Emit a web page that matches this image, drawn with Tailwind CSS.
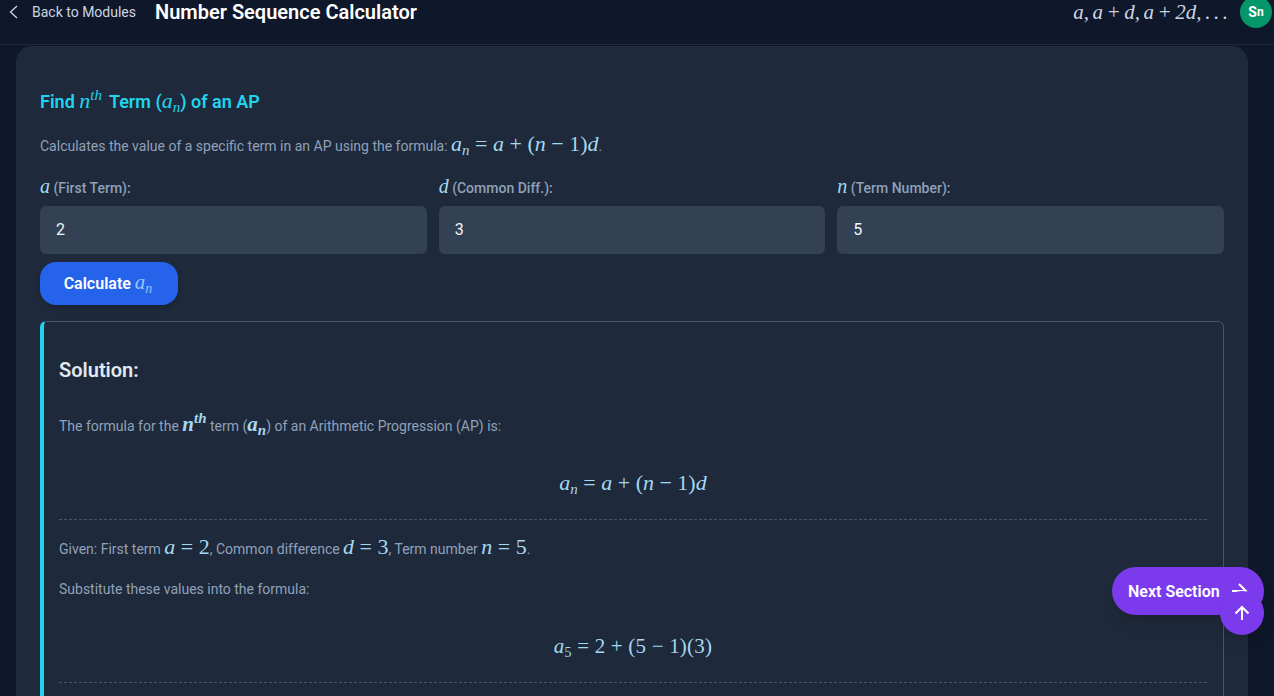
<!DOCTYPE html>
<html lang="en">
<head>
  <meta charset="UTF-8"><meta name="viewport" content="width=device-width,initial-scale=1.0">
  <title>Number Sequence Calculator</title>
  <script src="https://cdn.jsdelivr.net/npm/@tailwindcss/browser@4"></script>
</head>
<body class="bg-[#0f172a] h-[696px] overflow-hidden relative font-['Roboto',sans-serif] text-slate-200">
  <header class="h-[45px] border-b border-[#1e293b] bg-[#0f172a] flex justify-between pl-2 pr-[2px]">
    <div class="flex items-start">
      <a href="#" class="flex items-center h-6 text-[14px] text-slate-300">
        <svg class="w-3 h-4 mr-[12px]" viewBox="0 0 12 16" fill="none" stroke="#cbd5e1" stroke-width="1.3"><path d="M9 2 L2.5 8 L9 14"/></svg>
        Back to Modules
      </a>
      <h1 class="ml-[19px] h-6 leading-6 text-[20px] font-semibold text-white">Number Sequence Calculator</h1>
    </div>
    <div class="flex items-start">
      <span class="font-['Liberation_Serif',serif] italic text-[21px] leading-6 [word-spacing:-1.7px] text-[#cbd5e1]">a, a + d, a + 2d, . . .</span>
      <div class="ml-3 -mt-1 w-8 h-8 rounded-full bg-[#059669] flex items-center justify-center text-[14px] font-bold text-white">S<span class="text-[12px]">n</span></div>
    </div>
  </header>

  <main class="mx-4 mt-px w-[1232px] rounded-t-2xl bg-[#1e293b] px-6 pt-[41px]">
    <h2 class="h-7 leading-7 text-[18px] font-semibold text-[#22d3ee]">Find <span class="font-['Liberation_Serif',serif] italic font-normal text-[22px] mr-[3px]">n<sup class="text-[15px] -top-2 relative align-baseline">th</sup></span> Term (<span class="font-['Liberation_Serif',serif] italic font-normal text-[22px]">a<sub class="text-[15px] relative top-1 align-baseline">n</sub></span>) of an AP</h2>

    <p class="mt-[17px] h-6 leading-6 text-[14px] text-slate-400">Calculates the value of a specific term in an AP using the formula: <span class="font-['Liberation_Serif',serif] text-[22px] text-[#a5d8f0]"><i>a<sub class="text-[15px] relative top-1 align-baseline">n</sub></i> = <i>a</i> + (<i>n</i> − 1)<i>d</i></span>.</p>

    <div class="mt-[20px] grid grid-cols-3 gap-3">
      <div>
        <label class="block h-5 leading-5 text-[14px] font-medium text-slate-400"><i class="font-['Liberation_Serif',serif] font-normal text-[20px] text-[#a5d8f0]">a</i> (First Term):</label>
        <input type="text" value="2" class="mt-[10px] block w-full h-12 pl-4 pr-4 pb-[2px] rounded-md bg-[#334155] text-[16px] text-slate-100"/>
      </div>
      <div>
        <label class="block h-5 leading-5 text-[14px] font-medium text-slate-400"><i class="font-['Liberation_Serif',serif] font-normal text-[20px] text-[#a5d8f0]">d</i> (Common Diff.):</label>
        <input type="text" value="3" class="mt-[10px] block w-full h-12 pl-4 pr-4 pb-[2px] rounded-md bg-[#334155] text-[16px] text-slate-100"/>
      </div>
      <div>
        <label class="block h-5 leading-5 text-[14px] font-medium text-slate-400"><i class="font-['Liberation_Serif',serif] font-normal text-[20px] text-[#a5d8f0]">n</i> (Term Number):</label>
        <input type="text" value="5" class="mt-[10px] block w-full h-12 pl-4 pr-4 pb-[2px] rounded-md bg-[#334155] text-[16px] text-slate-100"/>
      </div>
    </div>

    <button class="mt-2 block w-[138px] h-[43px] pr-[2px] pb-[2px] rounded-2xl bg-[#2563eb] text-[16px] font-semibold text-white shadow-md">Calculate <i class="font-['Liberation_Serif',serif] font-normal text-[21px] text-[#93c5fd]">a<sub class="text-[14px] relative top-1 align-baseline">n</sub></i></button>

    <section class="mt-4 h-[500px] rounded-md border border-slate-600 border-l-4 border-l-[#22d3ee] pl-[15px] pr-4 pt-[32px]">
      <h3 class="h-8 leading-8 text-[20px] font-semibold text-slate-200">Solution:</h3>

      <p class="mt-[26px] h-6 leading-6 text-[14px] text-slate-400">The formula for the <span class="font-['Liberation_Serif',serif] font-bold italic text-[21px] text-[#a5d8f0]">n<sup class="text-[15px] relative -top-2 align-baseline">th</sup></span> term (<span class="font-['Liberation_Serif',serif] font-bold italic text-[21px] text-[#a5d8f0]">a<sub class="text-[15px] relative top-1 align-baseline">n</sub></span>) of an Arithmetic Progression (AP) is:</p>

      <div class="mt-[33px] h-7 leading-7 text-center font-['Liberation_Serif',serif] text-[22px] text-[#a5d8f0]"><i>a<sub class="text-[15px] relative top-1 align-baseline">n</sub></i> = <i>a</i> + (<i>n</i> − 1)<i>d</i></div>

      <div class="mt-[22px] border-t border-dashed border-slate-600"></div>

      <p class="mt-[15px] h-6 leading-6 text-[14px] text-slate-400">Given: First term <span class="font-['Liberation_Serif',serif] text-[22px] text-[#a5d8f0]"><i>a</i> = 2</span>, Common difference <span class="font-['Liberation_Serif',serif] text-[22px] text-[#a5d8f0]"><i>d</i> = 3</span>, Term number <span class="font-['Liberation_Serif',serif] text-[22px] text-[#a5d8f0]"><i>n</i> = 5</span>.</p>

      <p class="mt-[18px] h-6 leading-6 text-[14px] text-slate-400">Substitute these values into the formula:</p>

      <div class="mt-[31px] h-7 leading-7 text-center font-['Liberation_Serif',serif] text-[21px] tracking-[0.2px] text-[#a5d8f0]"><i>a</i><sub class="text-[14px] relative top-1 align-baseline">5</sub> = 2 + (5 − 1)(3)</div>

      <div class="mt-[22px] border-t border-dashed border-slate-600"></div>
    </section>
  </main>

  <button class="absolute left-[1112px] top-[567px] w-[152px] h-12 rounded-full bg-[#7c3aed] pl-[16px] pt-[2px] flex items-center text-[16px] font-semibold text-white shadow-lg">
    Next Section
    <svg class="ml-[9px] -mt-[3px] w-5 h-5" viewBox="0 0 20 20" fill="none" stroke="#fff" stroke-width="2"><path d="M3 10 H17 M10 3 L17 10 L10 17"/></svg>
  </button>
  <button class="absolute left-[1220px] top-[591px] w-11 h-11 rounded-full bg-[#7c3aed] flex items-center justify-center shadow-lg">
    <svg class="w-5 h-5" viewBox="0 0 20 20" fill="none" stroke="#fff" stroke-width="2"><path d="M10 17 V4 M3.5 10.5 L10 4 L16.5 10.5"/></svg>
  </button>
</body>
</html>
